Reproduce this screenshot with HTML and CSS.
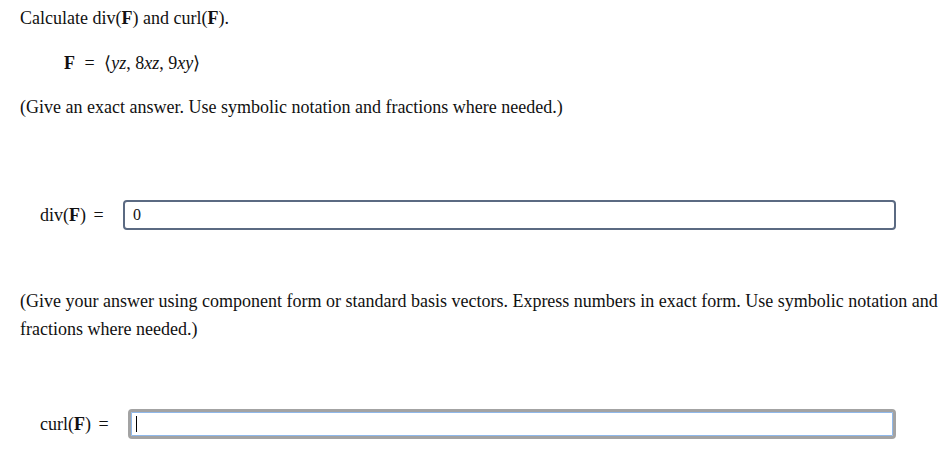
FILE: index.html
```html
<!DOCTYPE html>
<html>
<head>
<meta charset="utf-8">
<link rel="stylesheet" href="styles.css">
</head>
<body>
<div class="page">
  <p class="line intro">Calculate div(<b>F</b>) and curl(<b>F</b>).</p>
  <p class="line formula"><b>F</b> <span class="eq">=</span> <span class="ang">⟨</span><i>yz</i>, 8<i>xz</i>, 9<i>x</i><i>y</i><span class="ang">⟩</span></p>
  <p class="line note">(Give an exact answer. Use symbolic notation and fractions where needed.)</p>
  <div class="answer div-row">
    <span class="label">div(<b>F</b>) <span class="eq">=</span></span>
    <div class="box box-dark">0</div>
  </div>
  <p class="line note2">(Give your answer using component form or standard basis vectors. Express numbers in exact form. Use symbolic notation and fractions where needed.)</p>
  <div class="answer curl-row">
    <span class="label">curl(<b>F</b>) <span class="eq">=</span></span>
    <div class="box box-focus"><span class="caret"></span></div>
  </div>
</div>
</body>
</html>
```
FILE: styles.css
```css
html, body {
  margin: 0;
  padding: 0;
  background: #ffffff;
}
body {
  font-family: "Liberation Serif", "Times New Roman", serif;
  font-size: 18px;
  color: #111111;
}
.page {
  padding: 4px 4px 0 20px;
}
.line {
  margin: 0;
  line-height: 28px;
}
.formula {
  margin-top: 17px;
  padding-left: 44px;
}
.formula .eq {
  padding: 0 5px;
}
.eq {
  padding: 0 3px;
}
.note {
  margin-top: 16px;
}
.answer {
  display: flex;
  align-items: center;
  padding-left: 20px;
}
.div-row {
  margin-top: 79px;
}
.label {
  white-space: nowrap;
}
.div-row .label {
  width: 83px;
}
.curl-row .label {
  width: 88px;
}
.box {
  box-sizing: border-box;
  height: 30px;
  width: 773px;
  border-radius: 4px;
  display: flex;
  align-items: center;
  padding-left: 8px;
  font-size: 16px;
}
.box-dark {
  border: 2px solid #5b6a82;
}
.curl-row .box {
  width: 768px;
}
.box-focus {
  border: 3px solid #a3a3a3;
  box-shadow: inset 0 0 0 1px #8fb8ea;
  padding-left: 5px;
}
.caret {
  display: inline-block;
  width: 1px;
  height: 16px;
  background: #000;
}
.note2 {
  margin-top: 57px;
}
.curl-row {
  margin-top: 66px;
}
```
